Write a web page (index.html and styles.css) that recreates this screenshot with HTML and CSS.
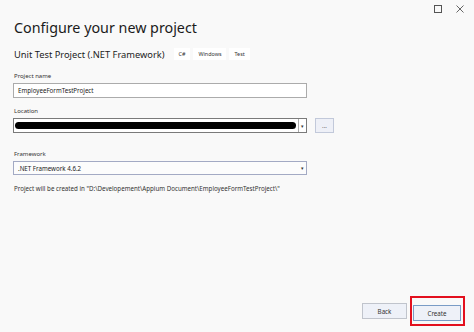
FILE: index.html
```html
<!DOCTYPE html>
<html lang="en">
<head>
  <meta charset="utf-8">
  <title>Configure your new project</title>
  <link rel="stylesheet" href="styles.css">
</head>
<body>
  <div class="window">
    <div class="titlebar">
      <svg class="winbtn" width="8" height="8" viewBox="0 0 8 8"><rect x="0.5" y="0.5" width="7" height="7" fill="none" stroke="#555"/></svg>
      <svg class="winbtn" width="8" height="8" viewBox="0 0 8 8"><path d="M0.5 0.5L7.5 7.5M7.5 0.5L0.5 7.5" stroke="#555" stroke-width="0.9"/></svg>
    </div>

    <h1>Configure your new project</h1>

    <div class="template">
      <span class="template-name">Unit Test Project (.NET Framework)</span>
      <span class="tag">C#</span>
      <span class="tag">Windows</span>
      <span class="tag">Test</span>
    </div>

    <label class="label first">Project name</label>
    <div class="field">EmployeeFormTestProject</div>

    <label class="label">Location</label>
    <div class="row">
      <div class="field combo location">
        <span class="redacted"></span>
        <span class="arrow">&#9662;</span>
      </div>
      <span class="browse">...</span>
    </div>

    <label class="label spaced">Framework</label>
    <div class="field combo framework">
      <span class="value">.NET Framework 4.6.2</span>
      <span class="arrow">&#9662;</span>
    </div>

    <p class="note">Project will be created in "D:\Developement\Appium Document\EmployeeFormTestProject\"</p>

    <div class="footer">
      <span class="btn">Back</span>
      <span class="highlight"><span class="btn primary">Create</span></span>
    </div>
  </div>
</body>
</html>
```

FILE: styles.css
```css
body {
  margin: 0;
  background: #f9f9f9;
  font-family: "Noto Sans", "Open Sans", sans-serif;
  color: #1b1b1b;
}

.window {
  width: 474px;
  height: 332px;
  box-sizing: border-box;
  padding: 0 13px;
  display: flex;
  flex-direction: column;
}

.titlebar {
  height: 18px;
  display: flex;
  justify-content: flex-end;
  align-items: center;
  gap: 14px;
  margin-right: -3px;
}

h1 {
  margin: 1px 0 0 1px;
  font-size: 14.3px;
  font-weight: normal;
  line-height: 18px;
}

.template {
  display: flex;
  align-items: center;
  margin: 10px 0 0 1px;
  height: 14px;
}

.template-name {
  font-size: 9.3px;
  margin-right: 9px;
}

.tag {
  font-size: 5.4px;
  background: #fff;
  padding: 2px 5px;
  margin-right: 3px;
  color: #333;
}

.label {
  display: block;
  font-size: 6px;
  color: #333;
  margin: 8px 0 0 1px;
  line-height: 10px;
}

.label.first {
  margin-top: 10px;
}

.label.spaced {
  margin-top: 16px;
}

.field {
  margin-top: 2px;
  width: 294px;
  height: 15px;
  box-sizing: border-box;
  border: 1px solid #ababab;
  background: #fff;
  font-size: 6.2px;
  padding: 0 4px;
  display: flex;
  align-items: center;
}

.row {
  display: flex;
  align-items: center;
  gap: 8px;
  margin-top: 2px;
}

.row .field {
  margin-top: 0;
}

.combo {
  padding-right: 0;
  justify-content: space-between;
}

.location {
  border-color: #7a7a7a;
  padding-left: 1px;
}

.redacted {
  flex: 1;
  height: 7px;
  background: #000;
  border-radius: 4px;
  margin-right: 2px;
}

.arrow {
  width: 7px;
  height: 100%;
  border-left: 1px solid #ababab;
  font-size: 5px;
  display: flex;
  align-items: center;
  justify-content: center;
  color: #333;
}

.framework {
  height: 14px;
  border-color: #a3aac4;
  background: #fcfcfc;
}

.framework .arrow {
  border-left: none;
}

.browse {
  width: 19px;
  height: 15px;
  box-sizing: border-box;
  border: 1px solid #c2c9da;
  background: #eef0f7;
  font-size: 6px;
  display: flex;
  align-items: center;
  justify-content: center;
  color: #444;
}

.note {
  font-size: 6.2px;
  line-height: 10px;
  margin: 9px 0 0 1px;
  color: #333;
}

.footer {
  margin-top: auto;
  margin-bottom: 6px;
  display: flex;
  justify-content: flex-end;
  align-items: center;
  gap: 3px;
  margin-right: -4px;
}

.btn {
  width: 45px;
  height: 16px;
  box-sizing: border-box;
  border: 1px solid #c0c4cc;
  background: #eef1f8;
  font-size: 6.2px;
  display: flex;
  align-items: center;
  justify-content: center;
  color: #333;
}

.btn.primary {
  width: 48px;
  border-color: #7a9cc6;
}

.highlight {
  border: 2px solid #e3101e;
  padding: 7px 2px 3px 1px;
}
```
